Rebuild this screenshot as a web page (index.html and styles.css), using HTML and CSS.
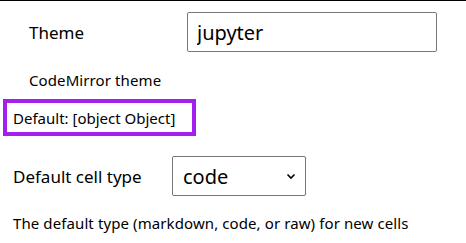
FILE: index.html
```html
<!DOCTYPE html>
<html lang="en">
<head>
  <meta charset="UTF-8">
  <title>Settings</title>
  <link rel="stylesheet" href="styles.css">
</head>
<body>
  <div class="panel">
    <div class="fila tema">
      <label class="etiqueta">Theme</label>
      <input class="entrada" type="text" value="jupyter">
    </div>
    <div class="descripcion tema-desc">CodeMirror theme</div>
    <div class="defecto">Default: [object Object]</div>
    <div class="fila celda">
      <label class="etiqueta">Default cell type</label>
      <div class="selector">
        <span>code</span>
        <svg width="12" height="8" viewBox="0 0 12 8"><path d="M2.5 2.5 L6 6 L9.5 2.5" fill="none" stroke="#000" stroke-width="1.6"/></svg>
      </div>
    </div>
    <div class="descripcion celda-desc">The default type (markdown, code, or raw) for new cells</div>
  </div>
</body>
</html>
```
FILE: styles.css
```css
body {
  margin: 0;
  font-family: "Noto Sans", "Open Sans", sans-serif;
  color: #000;
  background: #fff;
}
.panel {
  border-top: 1px solid #000;
  height: 242px;
}
.fila {
  display: flex;
  align-items: center;
}
.etiqueta {
  font-size: 17px;
}
.tema {
  margin-top: 11px;
  padding-left: 29px;
}
.tema .etiqueta {
  width: 158px;
}
.entrada {
  width: 250px;
  height: 40px;
  box-sizing: border-box;
  border: 1px solid #767676;
  border-radius: 2px;
  padding: 0 9px;
  font-family: inherit;
  font-size: 20px;
  color: #000;
  margin: 0;
}
.descripcion {
  font-size: 15px;
  letter-spacing: 0.1px;
}
.tema-desc {
  padding-left: 29px;
  margin-top: 18px;
  line-height: 20px;
}
.defecto {
  margin: 9px 0 0 3px;
  width: 193px;
  height: 37px;
  box-sizing: border-box;
  border: 4px solid #a31ff0;
  font-size: 15px;
  display: flex;
  align-items: center;
  padding-left: 6px;
}
.celda {
  margin-top: 20px;
  padding-left: 13px;
}
.celda .etiqueta {
  width: 159px;
}
.selector {
  width: 134px;
  height: 40px;
  box-sizing: border-box;
  border: 1px solid #767676;
  border-radius: 2px;
  display: flex;
  align-items: center;
  justify-content: space-between;
  padding: 0 8px 0 10px;
  font-size: 20px;
}
.celda-desc {
  padding-left: 13px;
  margin-top: 17px;
  line-height: 20px;
}
```
